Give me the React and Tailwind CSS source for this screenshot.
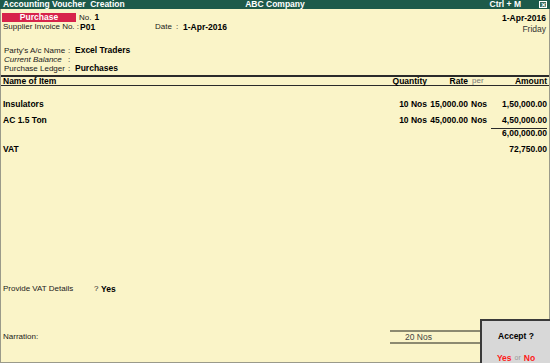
import React from "react";

const items = [
  { name: "Insulators", qty: "10 Nos", rate: "15,000.00", per: "Nos", amount: "1,50,000.00" },
  { name: "AC 1.5 Ton", qty: "10 Nos", rate: "45,000.00", per: "Nos", amount: "4,50,000.00" },
];

const Field = ({ label, value, italic }) => (
  <div className="flex h-[9px] items-center pl-[3px]">
    <span className={`w-[64px] ${italic ? "italic" : ""}`}>{label}</span>
    <span className="w-[7px]">:</span>
    <span className="text-[8.5px] font-bold text-black">{value}</span>
  </div>
);

const App = () => {
  return (
    <div
      className="relative flex h-[363px] w-[550px] flex-col overflow-hidden bg-[#faf4c8] text-[8px] leading-none text-[#1a1a1a]"
      style={{ fontFamily: '"Liberation Sans", Arial, sans-serif' }}
    >
      {/* title bar */}
      <div className="grid h-[9px] grid-cols-[1fr_auto_1fr] items-center bg-[#1d5a4a] text-[8.5px] font-bold text-white">
        <span className="pl-[3px]">Accounting Voucher&nbsp; Creation</span>
        <span>ABC Company</span>
        <span className="flex items-center justify-end">
          <span className="pr-[18px]">Ctrl + M</span>
          <span className="mr-[3px] flex h-[7px] w-[8px] items-center justify-center border border-white bg-[#3b6e60] text-[6px] leading-none">
            ✕
          </span>
        </span>
      </div>

      {/* body */}
      <div className="flex flex-1 flex-col border-x border-b border-[#9a9a8a]">
        {/* header section */}
        <div className="mt-[4px] flex">
          <div className="flex-1">
            <div className="flex h-[9px] items-center">
              <span className="ml-[1px] flex h-[9px] w-[74px] items-center justify-center bg-[#d7234b] text-[8.5px] font-bold text-white">
                Purchase
              </span>
              <span className="ml-[3px]">No.</span>
              <span className="ml-[3px] text-[8.5px] font-bold text-black">1</span>
            </div>
            <div className="flex h-[10px] items-center pl-[2px]">
              <span className="w-[77px]">Supplier Invoice No. :</span>
              <span className="w-[75px] text-[8.5px] font-bold text-black">P01</span>
              <span className="w-[21px]">Date</span>
              <span className="w-[7px]">:</span>
              <span className="text-[8.5px] font-bold text-black">1-Apr-2016</span>
            </div>
          </div>
          <div className="flex flex-col items-end pr-[3px]">
            <span className="flex h-[10px] items-center text-[8.5px] font-bold text-black">1-Apr-2016</span>
            <span className="mt-[1px] flex h-[10px] items-center text-[8.5px] text-[#333]">Friday</span>
          </div>
        </div>

        <div className="mt-[12px]">
          <Field label="Party's A/c Name" value="Excel Traders" />
          <Field label="Current Balance" value="" italic />
          <Field label="Purchase Ledger" value="Purchases" />
        </div>

        {/* item table */}
        <div className="mt-[2px] flex flex-1 flex-col border-t-2 border-[#2a2a2a] text-[8.5px]">
          <div className="grid h-[9px] grid-cols-[386px_40px_41px_23px_1fr] items-center border-b border-[#2a2a2a] pr-[2px] font-bold text-black">
            <span className="pl-[2px]">Name of Item</span>
            <span className="text-right">Quantity</span>
            <span className="text-right">Rate</span>
            <span className="pl-[4px] text-[8px] font-normal text-[#777]">per</span>
            <span className="text-right">Amount</span>
          </div>

          <div className="mt-[13px] flex flex-col gap-[6px]">
            {items.map((it) => (
              <div
                key={it.name}
                className="grid h-[10px] grid-cols-[386px_40px_41px_23px_1fr] items-center pr-[2px] font-bold text-black"
              >
                <span className="pl-[2px]">{it.name}</span>
                <span className="text-right">{it.qty}</span>
                <span className="text-right">{it.rate}</span>
                <span className="pl-[3px]">{it.per}</span>
                <span className="text-right">{it.amount}</span>
              </div>
            ))}
          </div>

          {/* sub total */}
          <div className="mt-[3px] flex justify-end pr-[2px]">
            <div className="w-[56px] border-t border-[#2a2a2a]">
              <div className="flex h-[9px] items-center justify-end font-bold text-black">6,00,000.00</div>
            </div>
          </div>

          <div className="mt-[6px] flex h-[10px] items-center justify-between pr-[2px] font-bold text-black">
            <span className="pl-[2px]">VAT</span>
            <span>72,750.00</span>
          </div>

          <div className="mt-[130px] flex h-[10px] items-center pl-[2px] text-[8px]">
            <span className="w-[91px]">Provide VAT Details</span>
            <span className="w-[7px]">?</span>
            <span className="text-[8.5px] font-bold text-black">Yes</span>
          </div>

          {/* narration */}
          <div className="mt-[36px] flex h-[14px] items-center text-[8px]">
            <span className="w-[389px] pl-[2px]">Narration:</span>
            <div className="flex h-[14px] w-[91px] items-center border-y-2 border-[#8c8a70] pl-[15px] text-[8.5px] text-[#444]">
              20 Nos
            </div>
          </div>
        </div>
      </div>

      {/* accept popup */}
      <div className="absolute bottom-0 right-0 flex h-[44px] w-[70px] flex-col items-center border-l-2 border-t-2 border-[#3a3a3a] bg-[#d8d8d8]">
        <span className="mt-[11px] text-[8.5px] font-bold text-black">Accept ?</span>
        <span className="mt-[13px] flex items-center gap-[3px]">
          <span className="text-[8.5px] font-bold text-[#ff1a1a]">Yes</span>
          <span className="text-[7px] text-[#999]">or</span>
          <span className="text-[8.5px] font-bold text-[#ff1a1a]">No</span>
        </span>
      </div>
    </div>
  );
};

export default App;
